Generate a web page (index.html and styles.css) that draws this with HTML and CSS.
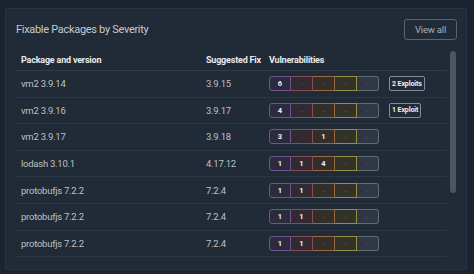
FILE: index.html
```html
<!DOCTYPE html>
<html lang="en">
<head>
  <meta charset="UTF-8">
  <meta name="viewport" content="width=device-width, initial-scale=1.0">
  <title>Fixable Packages by Severity</title>
  <link rel="stylesheet" href="styles.css">
</head>
<body>
  <div class="panel">
    <div class="panel-head">
      <h2>Fixable Packages by Severity</h2>
      <button class="btn">View all</button>
    </div>
    <div class="scroll">
      <table class="pkg-table">
        <thead>
          <tr>
            <th class="col-pkg">Package and version</th>
            <th class="col-fix">Suggested Fix</th>
            <th>Vulnerabilities</th>
          </tr>
        </thead>
        <tbody>
          <tr>
            <td>vm2 3.9.14</td>
            <td class="fix">3.9.15</td>
            <td><div class="vulns">
              <div class="sev sev-c">6</div><div class="sev sev-h empty">-</div><div class="sev sev-m empty">-</div><div class="sev sev-l empty">-</div><div class="sev sev-u empty">-</div>
              <span class="exploit">2 Exploits</span>
            </div></td>
          </tr>
          <tr>
            <td>vm2 3.9.16</td>
            <td class="fix">3.9.17</td>
            <td><div class="vulns">
              <div class="sev sev-c">4</div><div class="sev sev-h empty">-</div><div class="sev sev-m empty">-</div><div class="sev sev-l empty">-</div><div class="sev sev-u empty">-</div>
              <span class="exploit">1 Exploit</span>
            </div></td>
          </tr>
          <tr>
            <td>vm2 3.9.17</td>
            <td class="fix">3.9.18</td>
            <td><div class="vulns">
              <div class="sev sev-c">3</div><div class="sev sev-h empty">-</div><div class="sev sev-m">1</div><div class="sev sev-l empty">-</div><div class="sev sev-u empty">-</div>
            </div></td>
          </tr>
          <tr>
            <td>lodash 3.10.1</td>
            <td class="fix">4.17.12</td>
            <td><div class="vulns">
              <div class="sev sev-c">1</div><div class="sev sev-h">1</div><div class="sev sev-m">4</div><div class="sev sev-l empty">-</div><div class="sev sev-u empty">-</div>
            </div></td>
          </tr>
          <tr>
            <td>protobufjs 7.2.2</td>
            <td class="fix">7.2.4</td>
            <td><div class="vulns">
              <div class="sev sev-c">1</div><div class="sev sev-h">1</div><div class="sev sev-m empty">-</div><div class="sev sev-l empty">-</div><div class="sev sev-u empty">-</div>
            </div></td>
          </tr>
          <tr>
            <td>protobufjs 7.2.2</td>
            <td class="fix">7.2.4</td>
            <td><div class="vulns">
              <div class="sev sev-c">1</div><div class="sev sev-h">1</div><div class="sev sev-m empty">-</div><div class="sev sev-l empty">-</div><div class="sev sev-u empty">-</div>
            </div></td>
          </tr>
          <tr>
            <td>protobufjs 7.2.2</td>
            <td class="fix">7.2.4</td>
            <td><div class="vulns">
              <div class="sev sev-c">1</div><div class="sev sev-h">1</div><div class="sev sev-m empty">-</div><div class="sev sev-l empty">-</div><div class="sev sev-u empty">-</div>
            </div></td>
          </tr>
        </tbody>
      </table>
      <div class="scrollbar"><div class="thumb"></div></div>
    </div>
  </div>
</body>
</html>
```
FILE: styles.css
```css
body { margin: 0; background: #1b2330; font-family: Roboto, "Liberation Sans", sans-serif; color: #c9cdd3; height: 274px; overflow: hidden; }
.panel { margin: 8px 7px 0 5px; height: 262px; box-sizing: border-box; background: #212a37; border: 1px solid #2a3341; border-radius: 2px; padding: 10px 9px 0 10px; overflow: hidden; }
.panel-head { display: flex; justify-content: space-between; align-items: center; height: 21px; }
.panel-head h2 { margin: 0; font-size: 11px; font-weight: 400; color: #c5cad1; letter-spacing: -0.3px; }
.btn { height: 21px; width: 53px; background: transparent; border: 1px solid #5a6370; border-radius: 3px; color: #a9afb8; font-family: inherit; font-size: 9.5px; letter-spacing: -0.2px; padding: 0; }
.scroll { display: flex; margin-top: 9px; gap: 3px; }
.pkg-table { width: 431px; border-collapse: collapse; }
.pkg-table th { text-align: left; font-weight: 700; color: #e8eaed; font-size: 9px; letter-spacing: -0.2px; white-space: nowrap; height: 21px; padding: 0; border-bottom: 1px solid #323b48; }
.pkg-table td { height: 25.6px; padding: 0; border-bottom: 1px solid #2d3643; color: #bcc1c8; font-size: 9.5px; letter-spacing: -0.25px; }
.pkg-table .col-pkg, .pkg-table td:first-child { padding-left: 5px; width: 185px; }
.pkg-table .col-fix { width: 63px; }
.vulns { display: flex; align-items: center; letter-spacing: 0; }
.sev { width: 20px; height: 13px; border: 1px solid; display: flex; align-items: center; justify-content: center; font-size: 7.5px; font-weight: 700; color: #f0f0f0; }
.sev.empty { color: #737b86; font-weight: 400; font-size: 6px; }
.sev-c { border-color: #6f5590; background: #2b2a3e; border-radius: 3px 0 0 3px; }
.sev-h { border-color: #8a4a59; background: #322a31; border-left: none; width: 21px; }
.sev-m { border-color: #94693f; background: #332e28; border-left: none; width: 21px; }
.sev-l { border-color: #958f41; background: #333228; border-left: none; width: 21px; }
.sev-u { border-color: #626b77; background: #2e3743; border-left: none; border-radius: 0 3px 3px 0; width: 21px; }
.exploit { margin-left: 10px; height: 13px; padding: 0 2px; border: 1px solid #848c97; border-radius: 2px; font-size: 7px; font-weight: 700; color: #eef0f2; display: flex; align-items: center; letter-spacing: -0.1px; }
.scrollbar { width: 6px; padding-top: 2px; }
.thumb { width: 6px; height: 142px; background: #4b5563; border-radius: 3px; }
```
